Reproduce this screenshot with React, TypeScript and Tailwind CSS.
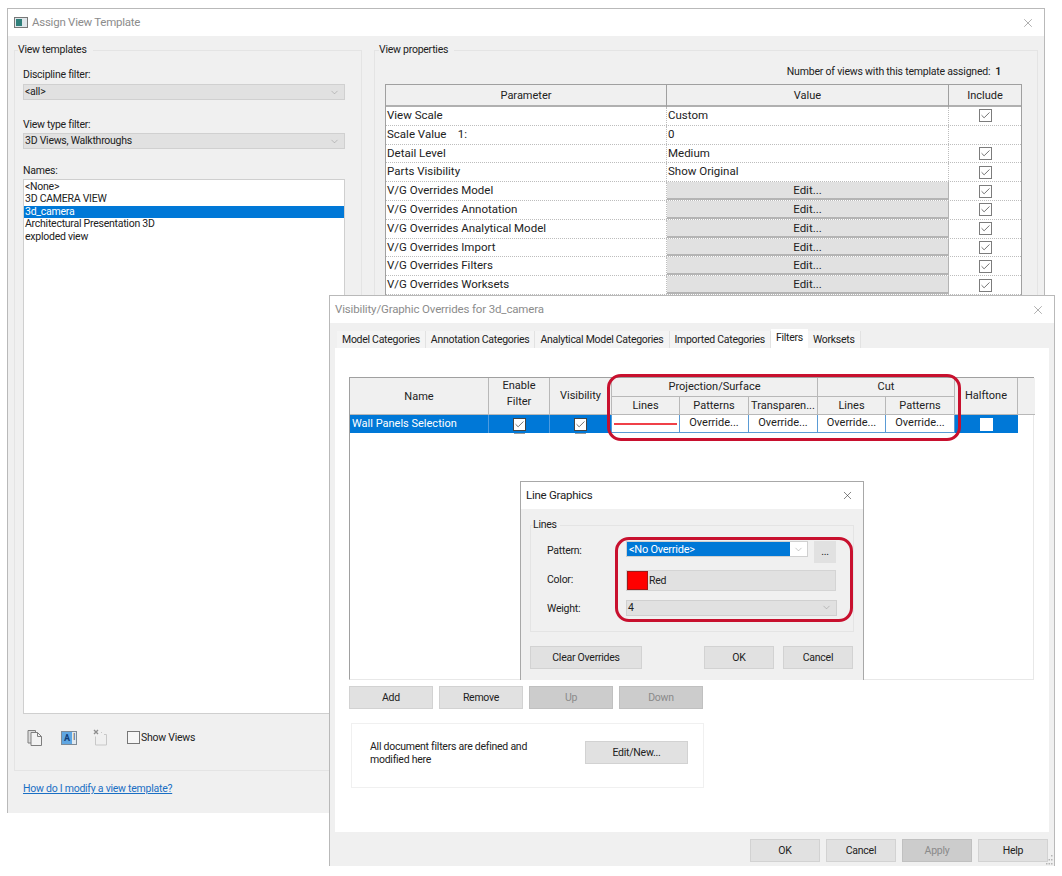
import { Check, ChevronDown, X } from "lucide-react";

const viewRows = [
  { name: "View Scale", value: "Custom", on: true },
  { name: "Scale Value    1:", value: "0", on: false },
  { name: "Detail Level", value: "Medium", on: true },
  { name: "Parts Visibility", value: "Show Original", on: true },
  { name: "V/G Overrides Model", edit: true, on: true },
  { name: "V/G Overrides Annotation", edit: true, on: true },
  { name: "V/G Overrides Analytical Model", edit: true, on: true },
  { name: "V/G Overrides Import", edit: true, on: true },
  { name: "V/G Overrides Filters", edit: true, on: true },
  { name: "V/G Overrides Worksets", edit: true, on: true },
];

const tabs = ["Model Categories", "Annotation Categories", "Analytical Model Categories", "Imported Categories", "Filters", "Worksets"];

function Tick({ on = true, className = "bg-white border-[#7c7c7c]" }: { on?: boolean; className?: string }) {
  return (
    <span className={`flex size-[13px] items-center justify-center border ${className}`}>
      {on && <Check className="size-[11px] text-[#222]" strokeWidth={1.4} />}
    </span>
  );
}

function Combo({ text, className = "" }: { text: string; className?: string }) {
  return (
    <div className={`flex items-center justify-between border border-[#d0d0d0] bg-[#e1e1e1] pl-[1px] pr-[4px] ${className}`}>
      <span>{text}</span>
      <ChevronDown className="size-[11px] text-[#8a8a8a]" strokeWidth={1} />
    </div>
  );
}

function Btn({ text, w, dim = false, className = "" }: { text: string; w: string; dim?: boolean; className?: string }) {
  return (
    <div
      className={`flex h-[23px] items-center justify-center border ${w} ${
        dim ? "border-[#c0c0c0] bg-[#cccccc] text-[#8a8a8a]" : "border-[#d2d2d2] bg-[#e1e1e1] text-[#222]"
      } ${className}`}
    >
      {text}
    </div>
  );
}

function Th({ children, className = "" }: { children?: React.ReactNode; className?: string }) {
  return (
    <div className={`flex items-center justify-center border-r border-b border-[#b8b8b8] bg-[#f0f0f0] text-center leading-[16px] ${className}`}>
      {children}
    </div>
  );
}

function OverrideCell() {
  return <div className="flex items-center justify-center border-r border-b border-[#5a9bd5] bg-white text-[#222]">Override...</div>;
}

function BlueTick() {
  return (
    <div className="relative flex items-center justify-center border-r border-[#4d9be0] bg-[#0078d7]">
      <Tick className="bg-white border-[#444]" />
      <span className="absolute -bottom-[1px] h-[1px] w-[11px] bg-[#9a9a9a]" />
    </div>
  );
}

function AssignWindow() {
  return (
    <div className="absolute top-[8px] left-[7px] flex h-[805px] w-[1038px] flex-col border-x border-t border-[#b9b9b9] bg-[#f0f0f0]">
      <div className="flex h-[27px] shrink-0 items-center bg-white pr-[9px] pl-[6px] text-[11.5px] text-[#8c8c8c]">
        <span className="mr-[4px] flex h-[11px] w-[14px] items-center border border-[#777] bg-[#dfe6ea]">
          <span className="ml-[1px] h-[7px] w-[6px] bg-[#2f7f7a]" />
        </span>
        Assign View Template
        <X className="ml-auto size-[14px] text-[#777]" strokeWidth={1} />
      </div>
      <div className="flex flex-1 items-start gap-[12px] pt-[8px] pl-[6px]">
        <fieldset className="h-[727px] w-[348px] border border-[#e4e4e4] pr-[16px] pl-[8px]">
          <legend className="-ml-[5px] bg-[#f0f0f0] pr-[6px] leading-[12px]">View templates</legend>
          <p className="mt-[12px] leading-[14px]">Discipline filter:</p>
          <Combo text="<all>" className="mt-[2px] h-[16px]" />
          <p className="mt-[18px] leading-[14px]">View type filter:</p>
          <Combo text="3D Views, Walkthroughs" className="mt-[1px] h-[16px]" />
          <p className="mt-[15px] leading-[14px]">Names:</p>
          <div className="mt-[1px] h-[535px] border border-[#cfcfcf] bg-white pt-[1px] leading-[12.4px]">
            <p className="pl-[1px]">{"<None>"}</p>
            <p className="pl-[1px]">3D CAMERA VIEW</p>
            <p className="bg-[#0078d7] pl-[1px] text-white">3d_camera</p>
            <p className="pl-[1px]">Architectural Presentation 3D</p>
            <p className="pl-[1px]">exploded view</p>
          </div>
          <div className="mt-[15px] flex items-center pl-[4px]">
            <svg width="16" height="17" viewBox="0 0 16 17" fill="none" stroke="#7e7e7e">
              <path d="M1 1.500h7.500v12.500H1z" fill="#dcdcdc" />
              <path d="M4 3.500h6.500l4 4v9H4z" fill="#f2f2f2" />
              <path d="M10.500 3.500v4h4" />
            </svg>
            <span className="ml-[18px] flex h-[14px] w-[16px] items-center border border-[#7d8a96] bg-[#dfe8ef] text-[9px] leading-none font-bold">
              <span className="h-full w-[10px] bg-[#5fa6e2] text-center leading-[12px] text-[#123f78]">A</span>
              <span className="ml-[1px] font-normal text-[#555]">I</span>
            </span>
            <svg className="ml-[16px]" width="15" height="17" viewBox="0 0 15 17" fill="none">
              <path d="M1 1l4 4M5 1L1 5" stroke="#8e8e8e" strokeWidth="1.4" />
              <path d="M2.500 7.500v8.500h11V5.500H11M8 3.500h1" stroke="#c8c8c8" />
            </svg>
            <Tick on={false} className="ml-[19px] bg-[#f6f6f6] border-[#777]" />
            <span className="ml-[1px]">Show Views</span>
          </div>
        </fieldset>
        <fieldset className="h-[727px] w-[664px] border border-[#e4e4e4] pr-[14px] pl-[10px]">
          <legend className="-ml-[6px] bg-[#f0f0f0] pr-[6px] leading-[12px]">View properties</legend>
          <p className="mt-[9px] pr-[22px] text-right leading-[14px] tracking-[-0.2px]">
            Number of views with this template assigned:&nbsp; <b className="font-semibold">1</b>
          </p>
          <div className="mt-[5px] w-[637px] border-x border-t border-[#a0a0a0] bg-white text-[11.5px] tracking-normal">
            <div className="grid h-[22px] grid-cols-[281px_282px_1fr] border-b-2 border-[#b0b0b0] bg-[#f0f0f0] text-center text-[11px] leading-[22px]">
              <div className="border-r border-[#a0a0a0]">Parameter</div>
              <div className="border-r border-[#a0a0a0]">Value</div>
              <div>Include</div>
            </div>
            {viewRows.map((row) => (
              <div key={row.name} className="grid h-[18.8px] grid-cols-[281px_282px_1fr] grid-rows-[17.8px] border-b border-dotted border-[#bdbdbd] leading-[17px]">
                <div className="whitespace-pre border-r border-dotted border-[#bdbdbd] pl-[1px]">{row.name}</div>
                {row.edit ? (
                  <div className="border-r border-b-2 border-[#b4b4b4] bg-[#e1e1e1] text-center leading-[16px]">Edit...</div>
                ) : (
                  <div className="border-r border-dotted border-[#bdbdbd] pl-[1px]">{row.value}</div>
                )}
                <div className="flex items-center justify-center">{row.on && <Tick />}</div>
              </div>
            ))}
          </div>
        </fieldset>
      </div>
      <a className="absolute top-[773px] left-[15px] leading-[14px] text-[#1a6fc4] underline">How do I modify a view template?</a>
    </div>
  );
}

function LineGraphics() {
  return (
    <div className="absolute top-[185px] left-[190px] flex h-[199px] w-[344px] flex-col border-x border-t border-[#a8a8a8] bg-[#f0f0f0]">
      <div className="flex h-[27px] shrink-0 items-center justify-between bg-white pr-[9px] pl-[5px] text-[11.5px]">
        Line Graphics
        <X className="size-[13px] text-[#333]" strokeWidth={1.1} />
      </div>
      <fieldset className="mx-[9px] mt-[10px] h-[113px] border border-[#e4e4e4] pr-[16px] pl-[16px]">
        <legend className="-ml-[14px] bg-[#f0f0f0] pr-[3px] leading-[12px]">Lines</legend>
        <div className="grid grid-cols-[79px_1fr] items-center pt-[10px]">
          <span className="self-start leading-[20px]">Pattern:</span>
          <div className="flex items-start gap-[6px]">
            <div className="flex h-[16px] w-[182px] border border-[#d0d0d0] bg-white">
              <span className="flex-1 bg-[#0078d7] pl-[2px] text-[11px] leading-[15px] text-white">{"<No Override>"}</span>
              <span className="flex w-[17px] items-center justify-center">
                <ChevronDown className="size-[11px] text-[#8a8a8a]" strokeWidth={1} />
              </span>
            </div>
            <div className="flex h-[22px] w-[22px] items-center justify-center bg-[#e1e1e1] leading-[14px]">...</div>
          </div>
          <span className="mt-[6px]">Color:</span>
          <div className="mt-[7px] flex h-[21px] w-[210px] items-center border border-[#d4d4d4] bg-[#e1e1e1]">
            <span className="mr-[1px] h-[19px] w-[21px] border border-[#a01818] bg-[#ff0000]" />
            Red
          </div>
          <span className="mt-[10px]">Weight:</span>
          <Combo text="4" className="mt-[8px] h-[16px] w-[211px]" />
        </div>
      </fieldset>
      <div className="mt-[14px] flex items-center px-[9px]">
        <Btn text="Clear Overrides" w="w-[112px]" />
        <Btn text="OK" w="w-[70px]" className="ml-[62px] border-[#3e8fd4]" />
        <Btn text="Cancel" w="w-[70px]" className="ml-[9px]" />
      </div>
    </div>
  );
}

function OverridesWindow() {
  return (
    <div className="absolute top-[295px] left-[329px] flex h-[571px] w-[726px] flex-col border-x border-t border-[#b9b9b9] bg-[#f0f0f0]">
      <div className="flex h-[27px] shrink-0 items-center justify-between bg-white pr-[9px] pl-[5px] text-[11.5px] tracking-[-0.15px] text-[#8c8c8c]">
        Visibility/Graphic Overrides for 3d_camera
        <X className="size-[14px] text-[#777]" strokeWidth={1} />
      </div>
      <div className="mt-[8px] flex h-[17px] items-end pl-[7px] leading-[15px] tracking-[-0.28px]">
        {tabs.map((tab) => (
          <div
            key={tab}
            className={
              tab === "Filters"
                ? "flex h-[19px] items-start bg-white px-[5px] pt-[1px]"
                : "flex h-[17px] items-center border-r border-[#e2e2e2] bg-[#f4f4f4] px-[5px]"
            }
          >
            {tab}
          </div>
        ))}
      </div>
      <div className="relative mx-[5px] h-[484px] bg-white">
        <div className="absolute top-[29px] left-[14px] h-[303px] w-[685px] border border-[#a0a0a0] border-r-[#e8e8e8] border-b-[#e8e8e8]" />
        <div className="relative ml-[14px] pt-[29px]">
          <div className="grid w-[685px] grid-cols-[139px_61px_62px_68px_69px_69px_68px_69px_63px_17px] grid-rows-[19px_18px_18px] border-t border-l border-[#a0a0a0] text-[11px] tracking-normal">
            <Th className="row-span-2 pt-[1px]">Name</Th>
            <Th className="row-span-2 pb-[4px]">
              Enable
              <br />
              Filter
            </Th>
            <Th className="row-span-2">Visibility</Th>
            <Th className="col-span-3">Projection/Surface</Th>
            <Th className="col-span-2">Cut</Th>
            <Th className="row-span-2">Halftone</Th>
            <Th className="row-span-2 border-r-0" />
            <Th>Lines</Th>
            <Th>Patterns</Th>
            <Th>Transparen...</Th>
            <Th>Lines</Th>
            <Th>Patterns</Th>
            <div className="flex items-center border-r border-[#4d9be0] bg-[#0078d7] pl-[2px] text-white">Wall Panels Selection</div>
            <BlueTick />
            <BlueTick />
            <div className="flex items-center border-r border-b border-[#5a9bd5] bg-white px-[2px]">
              <span className="h-[2px] w-full bg-[#f04048]" />
            </div>
            <OverrideCell />
            <OverrideCell />
            <OverrideCell />
            <OverrideCell />
            <div className="flex items-center justify-center bg-[#0078d7]">
              <Tick on={false} className="bg-white border-white" />
            </div>
          </div>
        </div>
        <div className="relative mt-[253px] ml-[14px] flex gap-[6px]">
          <Btn text="Add" w="w-[84px]" />
          <Btn text="Remove" w="w-[84px]" />
          <Btn text="Up" w="w-[84px]" dim />
          <Btn text="Down" w="w-[84px]" dim />
        </div>
        <div className="relative mt-[14px] ml-[16px] flex h-[65px] w-[353px] items-start border border-[#f0f0f0] pt-[16px] pl-[18px] leading-[13px]">
          <p className="w-[200px]">
            All document filters are defined and
            <br />
            modified here
          </p>
          <Btn text="Edit/New..." w="w-[103px]" className="mt-[1px] ml-[15px]" />
        </div>
      </div>
      <div className="mt-[7px] flex justify-end gap-[6px] pr-[6px]">
        <Btn text="OK" w="w-[70px]" />
        <Btn text="Cancel" w="w-[70px]" />
        <Btn text="Apply" w="w-[70px]" dim />
        <Btn text="Help" w="w-[70px]" />
      </div>
      <svg className="absolute right-[1px] bottom-[1px]" width="7" height="10" viewBox="0 0 7 10" fill="#b5b5b5">
        <rect x="5" y="0" width="1.500" height="1.500" />
        <rect x="2.500" y="4" width="1.500" height="1.500" />
        <rect x="5" y="4" width="1.500" height="1.500" />
        <rect x="0" y="8" width="1.500" height="1.500" />
        <rect x="2.500" y="8" width="1.500" height="1.500" />
        <rect x="5" y="8" width="1.500" height="1.500" />
      </svg>
      <LineGraphics />
      <div className="absolute top-[78px] left-[277px] h-[67px] w-[354px] rounded-[14px] border-[3px] border-[#c8102e]" />
      <div className="absolute top-[241px] left-[285px] h-[85px] w-[238px] rounded-[14px] border-[3px] border-[#c8102e]" />
    </div>
  );
}

export default function App() {
  return (
    <div className="relative h-[876px] w-[1062px] overflow-hidden bg-white font-[Roboto,sans-serif] text-[10.5px] tracking-[-0.25px] text-[#222]">
      <AssignWindow />
      <OverridesWindow />
    </div>
  );
}
